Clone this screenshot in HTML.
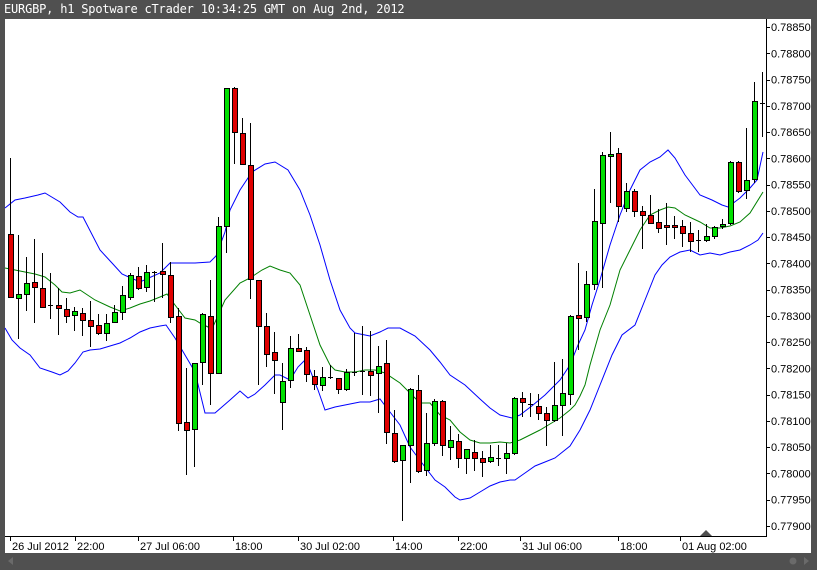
<!DOCTYPE html>
<html><head><meta charset="utf-8"><style>
html,body{margin:0;padding:0;background:#505050;}
#w{position:relative;width:817px;height:570px;background:#505050;overflow:hidden;border-top-right-radius:8px;}
#t{position:absolute;left:4px;top:2px;color:#fff;font:12px "DejaVu Sans Mono","Liberation Mono",monospace;letter-spacing:-0.2px;}
svg{position:absolute;left:0;top:0;}
</style></head><body><div id="w">
<div id="t">EURGBP, h1 Spotware cTrader 10:34:25 GMT on Aug 2nd, 2012</div>
<svg id="s" width="817" height="570" xmlns="http://www.w3.org/2000/svg" font-family="Liberation Sans, sans-serif" font-size="11">
<rect x="5" y="19" width="806" height="534" fill="#fff"/>
<g id="bands" fill="none" stroke-width="1">
<polyline stroke="#0000ff" points="5,208 15,200 25,198 38,195 45,193 60,202 70,212 78,217 83,217 100,250 112,263 122,274 140,282 160,273 170,263 180,263 195,263 210,262 216,256 225,232 230,210 240,190 252,172 265,164 275,162 288,170 300,190 310,215 320,245 330,280 340,310 350,328 355,333 370,336 380,332 388,328 400,328 415,336 430,350 440,362 450,375 465,385 480,399 490,408 500,415 512,418 520,415 533,405 545,395 560,380 570,365 578,345 585,330 592,305 600,280 610,245 620,215 630,190 640,170 650,162 660,157 668,150 675,158 685,175 700,195 712,200 722,205 728,207 740,198 750,188 757,180 763,152"/>
<polyline stroke="#008000" points="5,268 15,270 25,272 35,274 45,277 55,285 62,292 70,293 80,290 95,300 110,307 120,311 130,308 140,304 150,301 160,297 167,294 175,305 185,318 195,320 200,323 210,328 212,329 225,300 240,283 250,278 262,270 270,266 280,270 290,273 300,285 310,315 320,345 330,365 335,370 345,372 355,372 365,370 375,370 385,373 400,383 410,393 420,403 430,403 440,415 450,420 460,432 470,440 480,443 490,443 500,442 510,443 520,440 530,435 540,430 550,424 560,418 570,410 575,405 580,396 585,385 590,365 600,330 610,305 620,270 630,250 640,230 650,215 660,210 668,207 675,208 685,215 700,222 710,228 720,228 730,226 740,222 750,213 763,192"/>
<polyline stroke="#0000ff" points="5,328 12,340 20,348 30,355 40,368 52,372 60,375 68,371 75,363 83,352 90,350 100,349 110,346 120,343 130,338 140,332 150,328 160,326 166,325 175,338 185,355 195,372 205,413 215,413 230,400 240,391 248,398 255,394 265,385 275,375 280,375 290,380 298,367 305,360 310,370 318,390 325,410 335,407 345,405 360,402 370,402 380,399 390,412 400,425 410,447 425,467 435,480 445,487 455,497 460,500 470,498 480,492 490,486 500,482 510,480 515,480 525,473 535,466 545,462 555,458 570,446 580,430 590,410 600,385 612,355 622,335 635,325 645,300 655,275 662,265 670,257 680,252 690,250 700,255 710,253 720,255 730,252 740,250 750,245 758,240 763,233"/>
</g>
<g id="c" shape-rendering="crispEdges"></g>
<g stroke="#000" shape-rendering="crispEdges">
<line x1="766.5" y1="19" x2="766.5" y2="537"/>
<line x1="5" y1="536.5" x2="767" y2="536.5"/>
</g>
<g id="ax" shape-rendering="crispEdges"></g>
<polygon points="700,536 706,530 712,536" fill="#505050"/>
<polygon points="8,561 13,557 13,565" fill="#6a6a6a"/>
<circle cx="793" cy="561" r="3.5" fill="#6a6a6a"/>
<polygon points="804,557 809,561 804,565" fill="#6a6a6a"/>
</svg>
<script>
var D=[[234,297,158,297,0],[294,298,235,338,1],[283,294,257,310,1],[282,287,239,322,0],[288,307,253,307,0],[305,305,273,318,2],[305,308,288,334,0],[309,316,298,322,0],[311,315,307,330,1],[313,320,308,335,0],[320,326,301,346,0],[325,333,314,334,0],[323,333,314,340,1],[312,322,305,322,1],[295,312,286,319,1],[275,297,273,299,1],[276,288,267,289,0],[272,287,265,291,1],[272,272,271,301,2],[271,274,243,297,0],[275,317,262,322,0],[316,423,308,430,0],[422,430,368,474,0],[363,429,363,466,1],[314,362,313,384,1],[316,373,280,404,0],[226,373,217,373,1],[88,226,88,252,1],[88,132,87,163,0],[133,164,118,164,0],[165,279,123,298,0],[280,326,280,384,0],[326,354,313,366,0],[352,360,332,393,0],[381,402,363,429,1],[348,380,336,387,1],[348,351,334,351,0],[350,374,347,381,0],[376,384,370,389,0],[377,385,367,390,1],[377,377,365,378,2],[378,389,378,393,0],[372,389,369,390,1],[372,373,333,375,2],[371,371,326,394,2],[371,375,331,395,0],[366,373,346,412,1],[363,432,340,443,0],[433,461,410,462,0],[445,460,445,520,1],[389,445,388,482,1],[390,471,375,472,0],[443,470,413,475,1],[401,443,399,445,1],[401,445,400,455,0],[440,447,426,459,1],[441,458,434,467,0],[449,458,449,473,1],[452,458,440,470,0],[458,462,451,476,0],[457,461,445,462,1],[458,458,445,465,2],[453,458,443,473,1],[398,453,397,454,1],[398,402,392,416,0],[404,404,393,416,2],[406,413,394,419,0],[413,420,407,445,0],[405,420,362,421,1],[393,405,359,435,1],[316,394,315,404,1],[315,318,263,349,0],[284,317,271,321,1],[221,284,189,289,1],[155,223,152,287,1],[154,156,132,202,1],[153,206,148,221,0],[191,208,183,211,1],[191,211,189,216,0],[211,215,206,248,0],[215,223,195,223,0],[222,228,209,232,0],[225,227,203,244,0],[225,227,216,238,0],[226,233,220,246,0],[233,241,222,251,0],[240,240,230,251,2],[236,240,224,241,1],[227,236,226,238,1],[224,226,219,228,1],[162,223,161,224,1],[162,191,161,192,0],[180,190,128,198,1],[101,179,82,182,1],[103,103,72,136,2]];
var h='';
D.forEach(function(d,i){var x=10+8*i;
h+='<line x1="'+(x+.5)+'" y1="'+d[2]+'" x2="'+(x+.5)+'" y2="'+(d[3]+1)+'" stroke="#000"/>';
if(d[4]==2||d[1]-d[0]<1){h+='<line x1="'+(x-2)+'" y1="'+(d[0]+.5)+'" x2="'+(x+3)+'" y2="'+(d[0]+.5)+'" stroke="#000"/>';}
else{h+='<rect x="'+(x-2+.5)+'" y="'+(d[0]+.5)+'" width="5" height="'+(d[1]-d[0])+'" fill="'+(d[4]?'#00e000':'#e00000')+'" stroke="#000"/>';}
});
document.getElementById('c').innerHTML=h;
var a='';
for(var k=0;k<20;k++){var p=0.7885-k*0.0005;var y=27+k*26.26;
a+='<line x1="767" y1="'+(Math.round(y)+.5)+'" x2="770" y2="'+(Math.round(y)+.5)+'" stroke="#000"/>';
a+='<text x="771" y="'+(y+4)+'" fill="#000">'+p.toFixed(5)+'</text>';}
var T=[[10,'26 Jul 2012'],[75,'22:00'],[138,'27 Jul 06:00'],[233,'18:00'],[298,'30 Jul 02:00'],[393,'14:00'],[458,'22:00'],[520,'31 Jul 06:00'],[618,'18:00'],[680,'01 Aug 02:00']];
T.forEach(function(t){a+='<line x1="'+(t[0]+.5)+'" y1="537" x2="'+(t[0]+.5)+'" y2="541" stroke="#000"/>';
a+='<text x="'+(t[0]+2)+'" y="550" fill="#000">'+t[1]+'</text>';});
document.getElementById('ax').innerHTML=a;
</script>
</div></body></html>
